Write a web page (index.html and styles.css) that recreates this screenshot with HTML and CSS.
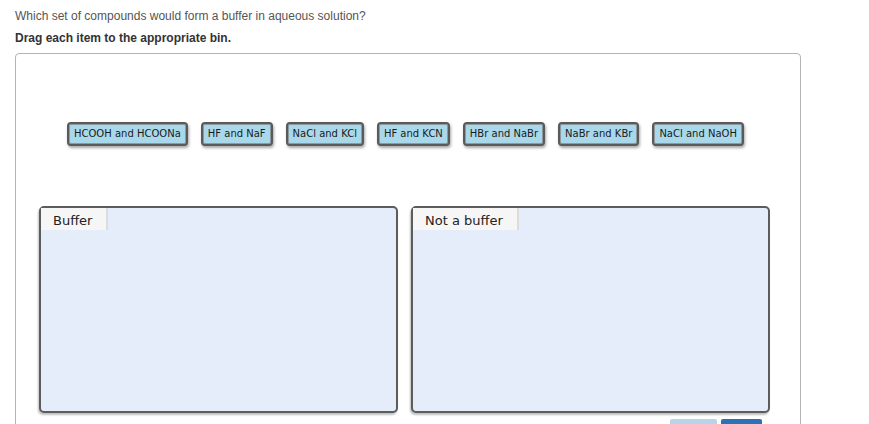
FILE: index.html
```html
<!DOCTYPE html>
<html>
<head>
<meta charset="utf-8">
<link rel="stylesheet" href="styles.css">
</head>
<body>
<div class="page">
  <p class="question">Which set of compounds would form a buffer in aqueous solution?</p>
  <p class="instruction">Drag each item to the appropriate bin.</p>
  <div class="panel">
    <div class="chips">
      <div class="chip">HCOOH and HCOONa</div>
      <div class="chip">HF and NaF</div>
      <div class="chip">NaCl and KCl</div>
      <div class="chip">HF and KCN</div>
      <div class="chip">HBr and NaBr</div>
      <div class="chip">NaBr and KBr</div>
      <div class="chip">NaCl and NaOH</div>
    </div>
    <div class="bins">
      <div class="bin"><div class="tab">Buffer</div></div>
      <div class="bin"><div class="tab">Not a buffer</div></div>
    </div>
    <div class="actions">
      <div class="btn btn-light"></div>
      <div class="btn btn-dark"></div>
    </div>
  </div>
</div>
</body>
</html>
```

FILE: styles.css
```css
html, body {
  margin: 0;
  padding: 0;
  background: #ffffff;
  overflow: hidden;
}
.page {
  padding: 9px 0 0 15px;
  font-family: "Liberation Sans", Arial, sans-serif;
}
.question {
  margin: 0;
  font-size: 12px;
  line-height: 15px;
  color: #555555;
}
.instruction {
  margin: 7px 0 0 0;
  font-size: 12px;
  line-height: 15px;
  font-weight: bold;
  color: #333333;
}
.panel {
  margin-top: 7px;
  width: 786px;
  height: 400px;
  border: 1px solid #b4b4b4;
  border-radius: 4px;
  box-sizing: border-box;
  padding-top: 68px;
}
.chips {
  display: flex;
  gap: 13px;
  padding-left: 51px;
  height: 29px;
}
.chip {
  height: 24px;
  box-sizing: border-box;
  border: 2px solid #5a5a5a;
  border-radius: 4px;
  background: #a9d8ea;
  padding: 0 5px;
  font-family: "DejaVu Sans", Verdana, sans-serif;
  font-size: 10px;
  line-height: 20px;
  color: #1a1a1a;
  box-shadow: 1px 2px 3px rgba(0, 0, 0, 0.35), inset 0 0 0 1px #8c9aa0;
  white-space: nowrap;
}
.bins {
  display: flex;
  gap: 13px;
  margin-top: 55px;
  padding-left: 23px;
}
.bin {
  width: 359px;
  height: 207px;
  box-sizing: border-box;
  border: 2px solid #5c5c5c;
  border-radius: 5px;
  background: #e5edfb;
  box-shadow: -1px 2px 2px rgba(0, 0, 0, 0.25);
  display: flex;
  align-items: flex-start;
}
.tab {
  background: #f6f6f6;
  border-right: 2px solid #dcdcdc;
  padding: 4px 14px 0 12px;
  height: 18px;
  font-family: "DejaVu Sans", Verdana, sans-serif;
  font-size: 13px;
  line-height: 18px;
  color: #222222;
}
.actions {
  display: flex;
  justify-content: flex-end;
  gap: 4px;
  padding-right: 38px;
  margin-top: 6px;
}
.btn {
  height: 20px;
  border-radius: 2px;
}
.btn-light {
  width: 47px;
  background: #b7d5ea;
}
.btn-dark {
  width: 41px;
  background: #2a72b5;
}
```
